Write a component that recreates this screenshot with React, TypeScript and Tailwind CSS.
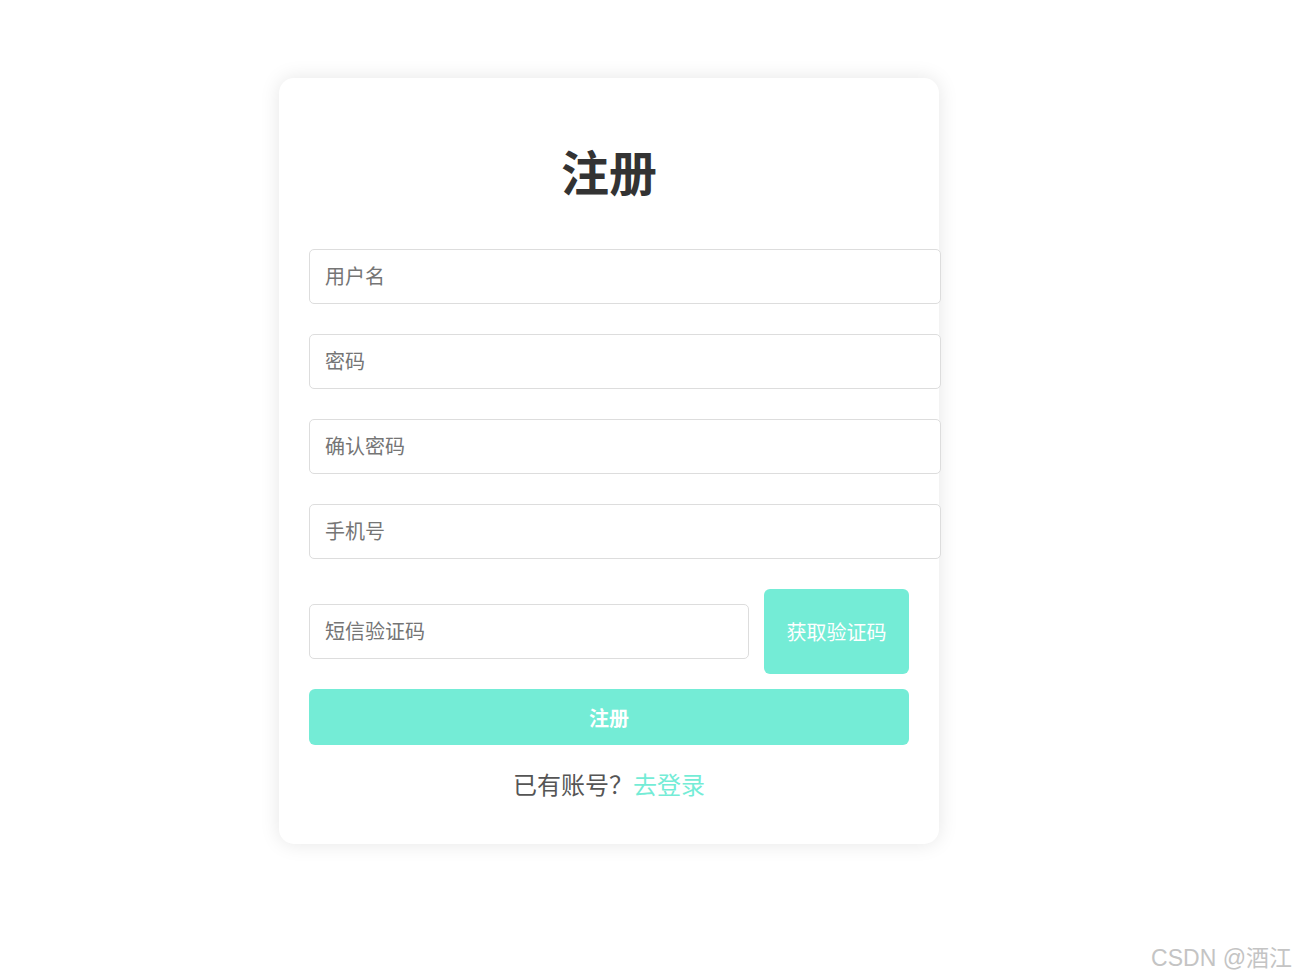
import React from "react";

const font = { fontFamily: '"Liberation Sans", "Noto Sans CJK SC", sans-serif' };

function Field({ placeholder }: { placeholder: string }) {
  return (
    <input
      placeholder={placeholder}
      className="box-content block w-full h-[23px] pl-[15px] pr-[15px] pt-[16px] pb-[14px] mb-[30px] border border-[#dddddd] rounded-[5px] bg-white text-[20px] leading-[23px] text-[#333] placeholder:text-[#757575] outline-none"
      style={font}
    />
  );
}

export default function App() {
  return (
    <div className="relative min-h-[980px] w-full bg-white" style={font}>
      <div className="pt-[78px] pl-[279px]">
        <div className="w-[660px] h-[766px] rounded-[15px] bg-white shadow-[0_0_20px_rgba(0,0,0,0.1)] px-[30px] pt-[30px] box-border">
          <h1 className="mt-[32px] mb-[39px] h-[70px] leading-[70px] text-center text-[48px] font-bold text-[#333]">
            注册
          </h1>
          <Field placeholder="用户名" />
          <Field placeholder="密码" />
          <Field placeholder="确认密码" />
          <Field placeholder="手机号" />
          <div className="flex items-center gap-[15px] mb-[15px]">
            <input
              placeholder="短信验证码"
              className="box-border block w-[440px] h-[55px] pl-[15px] pr-[15px] pt-[2px] border border-[#dddddd] rounded-[5px] bg-white text-[20px] text-[#333] placeholder:text-[#757575] outline-none"
              style={font}
            />
            <button
              className="w-[145px] h-[85px] pt-[3px] rounded-[6px] bg-[#74ecd6] text-white text-[20px]"
              style={font}
            >
              获取验证码
            </button>
          </div>
          <button
            className="block w-[600px] h-[56px] pt-[3px] rounded-[6px] bg-[#74ecd6] text-white text-[20px] font-bold"
            style={font}
          >
            注册
          </button>
          <p className="mt-[23px] text-center text-[24px] leading-[35px] text-[#555]">
            已有账号？<span className="text-[#74ecd6]">去登录</span>
          </p>
        </div>
      </div>
      <div className="absolute right-[3px] bottom-[5px] text-[23px] text-[#c4c4c4]" style={font}>
        CSDN @酒江
      </div>
    </div>
  );
}
